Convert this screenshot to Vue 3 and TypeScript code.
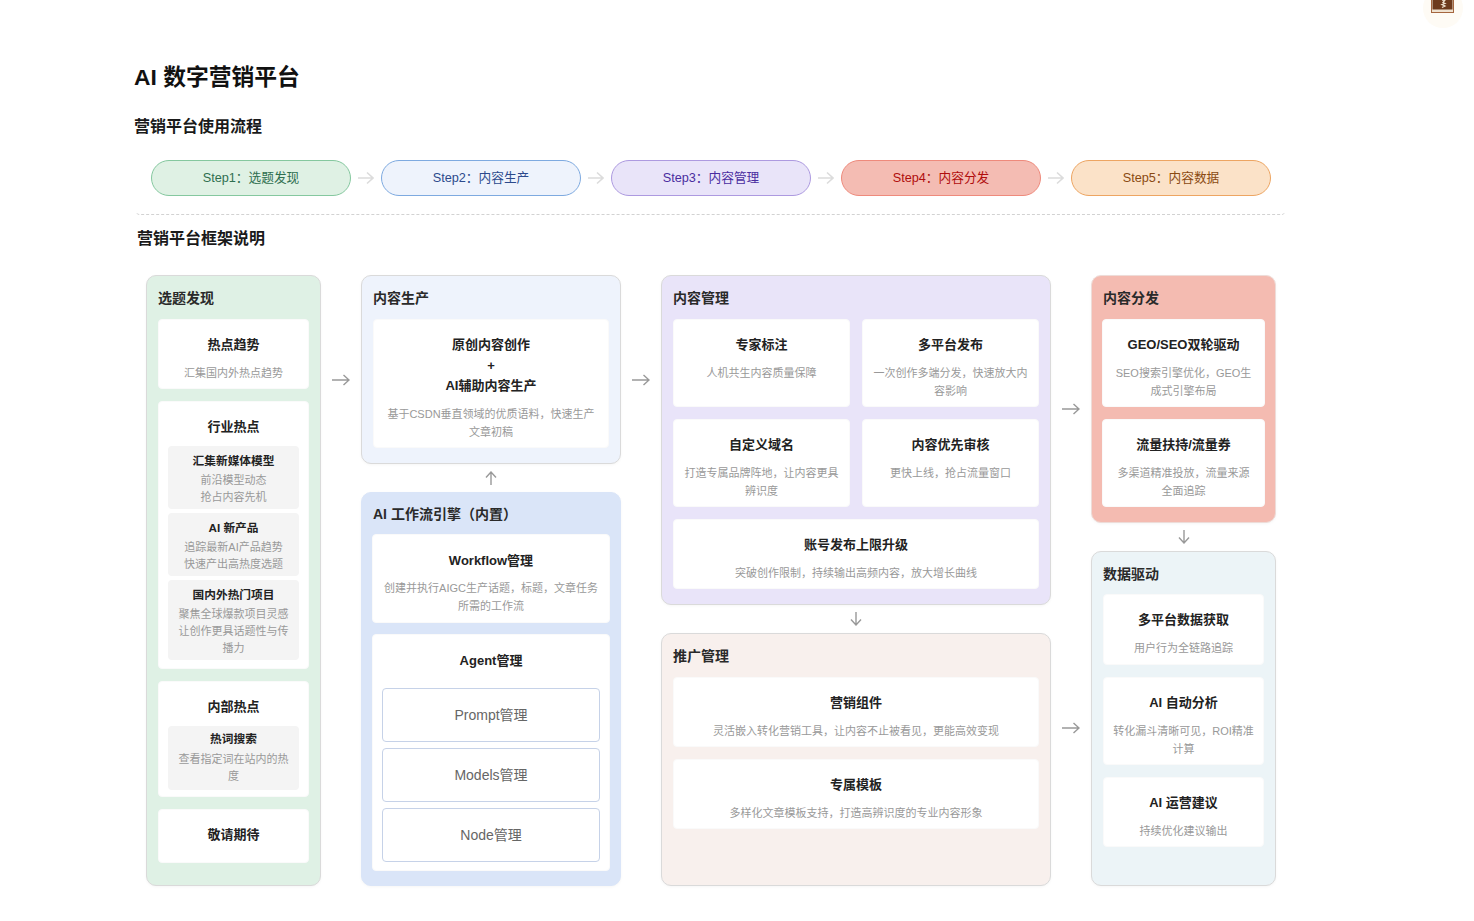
<template>
  <div class="page">
    <!-- corner badge -->
    <div class="badge" aria-hidden="true">
      <svg width="24" height="14" viewBox="0 0 24 14">
        <rect x="0.500" y="-2" width="22" height="15.500" fill="#efe2d0" stroke="#a5663f" />
        <rect x="1.500" y="-2" width="20" height="12.500" fill="#6d3a1c" />
        <path d="M11 1h3l-2 2.500 2 1-3 1 3 1.500-3 1.500" fill="none" stroke="#efe2d0" stroke-width="1.300" />
      </svg>
    </div>

    <h1 class="title">AI 数字营销平台</h1>
    <h2 class="heading">营销平台使用流程</h2>

    <div class="steps">
      <template v-for="(s, i) in steps" :key="s.text">
        <svg v-if="i > 0" class="stepArrow" width="16" height="14" viewBox="0 0 16 14">
          <path d="M0 7h15M9 1.5 15 7l-6 5.5" fill="none" stroke="#dcdcdc" stroke-width="1.6" />
        </svg>
        <div class="step" :class="s.cls">{{ s.text }}</div>
      </template>
    </div>

    <div class="divider"></div>
    <h2 class="heading second">营销平台框架说明</h2>

    <div class="frame">
      <!-- 选题发现 -->
      <section class="panel green col1">
        <h3>选题发现</h3>
        <div class="card">
          <h4>热点趋势</h4>
          <p>汇集国内外热点趋势</p>
        </div>
        <div class="card group">
          <h4>行业热点</h4>
          <div v-for="g in industry" :key="g.title" class="sub">
            <h5>{{ g.title }}</h5>
            <p>{{ g.desc }}</p>
          </div>
        </div>
        <div class="card group inner">
          <h4>内部热点</h4>
          <div class="sub">
            <h5>热词搜索</h5>
            <p>查看指定词在站内的热度</p>
          </div>
        </div>
        <div class="card soon">
          <h4>敬请期待</h4>
        </div>
      </section>

      <div class="gutter g1">
        <svg class="arrow" width="18" height="12" viewBox="0 0 18 12"><path d="M0 6h17M11.500 1 17 6l-5.500 5" /></svg>
      </div>

      <!-- 内容生产 -->
      <div class="stack col2">
        <section class="panel blue">
          <h3>内容生产</h3>
          <div class="card origin">
            <h4>原创内容创作</h4>
            <h4>+</h4>
            <h4>AI辅助内容生产</h4>
            <p>基于CSDN垂直领域的优质语料，快速生产文章初稿</p>
          </div>
        </section>
        <div class="vgap">
          <svg class="arrow" width="12" height="14" viewBox="0 0 12 14"><path d="M6 14V1M1 6.500 6 1l5 5.500" /></svg>
        </div>
        <section class="panel engine grow">
          <h3>AI 工作流引擎（内置）</h3>
          <div class="card">
            <h4>Workflow管理</h4>
            <p>创建并执行AIGC生产话题，标题，文章任务所需的工作流</p>
          </div>
          <div class="card agent">
            <h4>Agent管理</h4>
            <div v-for="a in agents" :key="a" class="tool">{{ a }}</div>
          </div>
        </section>
      </div>

      <div class="gutter g1">
        <svg class="arrow" width="18" height="12" viewBox="0 0 18 12"><path d="M0 6h17M11.500 1 17 6l-5.500 5" /></svg>
      </div>

      <!-- 内容管理 -->
      <div class="stack col3">
        <section class="panel purple">
          <h3>内容管理</h3>
          <div class="cardGrid">
            <div v-for="c in manage" :key="c.title" class="card">
              <h4>{{ c.title }}</h4>
              <p>{{ c.desc }}</p>
            </div>
            <div class="card wide">
              <h4>账号发布上限升级</h4>
              <p>突破创作限制，持续输出高频内容，放大增长曲线</p>
            </div>
          </div>
        </section>
        <div class="vgap">
          <svg class="arrow" width="12" height="14" viewBox="0 0 12 14"><path d="M6 0v13M1 7.500 6 13l5-5.500" /></svg>
        </div>
        <section class="panel rose grow">
          <h3>推广管理</h3>
          <div class="card">
            <h4>营销组件</h4>
            <p>灵活嵌入转化营销工具，让内容不止被看见，更能高效变现</p>
          </div>
          <div class="card">
            <h4>专属模板</h4>
            <p>多样化文章模板支持，打造高辨识度的专业内容形象</p>
          </div>
        </section>
      </div>

      <div class="gutter g3">
        <svg class="arrow" width="18" height="12" viewBox="0 0 18 12"><path d="M0 6h17M11.500 1 17 6l-5.500 5" /></svg>
        <svg class="arrow lower" width="18" height="12" viewBox="0 0 18 12"><path d="M0 6h17M11.500 1 17 6l-5.500 5" /></svg>
      </div>

      <!-- 内容分发 / 数据驱动 -->
      <div class="stack col4">
        <section class="panel red">
          <h3>内容分发</h3>
          <div class="card">
            <h4>GEO/SEO双轮驱动</h4>
            <p>SEO搜索引擎优化，GEO生成式引擎布局</p>
          </div>
          <div class="card">
            <h4>流量扶持/流量券</h4>
            <p>多渠道精准投放，流量来源全面追踪</p>
          </div>
        </section>
        <div class="vgap">
          <svg class="arrow" width="12" height="14" viewBox="0 0 12 14"><path d="M6 0v13M1 7.500 6 13l5-5.500" /></svg>
        </div>
        <section class="panel sky grow">
          <h3>数据驱动</h3>
          <div class="card">
            <h4>多平台数据获取</h4>
            <p>用户行为全链路追踪</p>
          </div>
          <div class="card">
            <h4>AI 自动分析</h4>
            <p>转化漏斗清晰可见，ROI精准计算</p>
          </div>
          <div class="card">
            <h4>AI 运营建议</h4>
            <p>持续优化建议输出</p>
          </div>
        </section>
      </div>
    </div>
  </div>
</template>

<script setup lang="ts">
const steps = [
  { text: 'Step1：选题发现', cls: 's1' },
  { text: 'Step2：内容生产', cls: 's2' },
  { text: 'Step3：内容管理', cls: 's3' },
  { text: 'Step4：内容分发', cls: 's4' },
  { text: 'Step5：内容数据', cls: 's5' },
];

const industry = [
  { title: '汇集新媒体模型', desc: '前沿模型动态\n抢占内容先机' },
  { title: 'AI 新产品', desc: '追踪最新AI产品趋势\n快速产出高热度选题' },
  { title: '国内外热门项目', desc: '聚焦全球爆款项目灵感\n让创作更具话题性与传播力' },
];

const agents = ['Prompt管理', 'Models管理', 'Node管理'];

const manage = [
  { title: '专家标注', desc: '人机共生内容质量保障' },
  { title: '多平台发布', desc: '一次创作多端分发，快速放大内容影响' },
  { title: '自定义域名', desc: '打造专属品牌阵地，让内容更具辨识度' },
  { title: '内容优先审核', desc: '更快上线，抢占流量窗口' },
];
</script>

<style>
html,
body {
  background: #fff;
}
</style>

<style scoped>
.page {
  position: relative;
  box-sizing: border-box;
  height: 921px;
  overflow: hidden;
  padding: 62px 0 0 134px;
  font-family: "Liberation Sans", "Noto Sans CJK SC", sans-serif;
  color: #222;
}
.badge {
  position: absolute;
  top: -12px;
  right: 11px;
  width: 40px;
  height: 40px;
  border-radius: 50%;
  background: #fefbf5;
  display: flex;
  align-items: flex-end;
  justify-content: center;
  padding-bottom: 15px;
  box-sizing: border-box;
}
.title {
  margin: 0;
  font-size: 22.800px;
  line-height: 30px;
  font-weight: 700;
  color: #111;
}
.heading {
  margin: 21px 0 0;
  font-size: 16px;
  line-height: 28px;
  font-weight: 700;
  color: #1a1a1a;
}
.heading.second {
  margin: 10px 0 0 3px;
}

.steps {
  display: flex;
  align-items: center;
  margin: 19px 0 0 17px;
}
.step {
  box-sizing: border-box;
  width: 200px;
  height: 36px;
  line-height: 34px;
  border: 1px solid;
  border-radius: 18px;
  text-align: center;
  font-size: 12.700px;
}
.stepArrow {
  flex: none;
  width: 16px;
  margin: 0 7px;
}
.s1 { background: #dff1e4; border-color: #85c89f; color: #2f6f50; }
.s2 { background: #eef3fc; border-color: #7eaae0; color: #2c4a8c; }
.s3 { background: #e9e4f9; border-color: #ad9ae0; color: #4a2da0; }
.s4 { background: #f4bcb3; border-color: #ee8a7c; color: #b00d0d; }
.s5 { background: #fbe2c8; border-color: #eda562; color: #8a4a12; }

.divider {
  width: 1149px;
  height: 18px;
  margin-left: 2px;
  border-bottom: 1px dashed #d2d2d2;
  border-radius: 0 0 4px 4px;
}

.frame {
  display: flex;
  height: 611px;
  margin: 22px 0 0 12px;
}
.col1 { width: 175px; }
.col2 { width: 260px; }
.col3 { width: 390px; }
.col4 { width: 185px; }
.stack {
  display: flex;
  flex-direction: column;
}
.grow { flex: 1; }
.gutter {
  flex: none;
  width: 40px;
  display: flex;
  flex-direction: column;
  align-items: center;
}
.g1 { padding-top: 99px; }
.g3 { padding-top: 128px; }
.lower { margin-top: 307px; }
.arrow { flex: none; }
.arrow path {
  fill: none;
  stroke: #999;
  stroke-width: 1.4;
}
.vgap {
  flex: none;
  height: 28px;
  display: flex;
  align-items: center;
  justify-content: center;
}

.panel {
  box-sizing: border-box;
  min-height: 0;
  border: 1px solid #dadada;
  border-radius: 10px;
  box-shadow: 0 1px 3px rgba(0, 0, 0, 0.04);
  padding: 0 11px 15px;
  display: flex;
  flex-direction: column;
  gap: 12px;
}
.panel h3 {
  margin: 12px 0 -2px;
  font-size: 14px;
  line-height: 21px;
  font-weight: 700;
  color: #2a2a2a;
}
.green { background: #dff1e5; }
.blue { background: #eef3fc; }
.engine { background: #dae5f8; border-color: #dae5f8; padding: 0 10px 15px; gap: 11px; }
.engine h3 { margin: 11px 0 -2px 1px; }
.engine .card { padding-top: 16px; padding-bottom: 7px; }
.engine .card p { margin-top: 7.500px; }
.purple { background: #e9e4f9; }
.rose { background: #f8f0ed; }
.red { background: #f4bbb1; border-color: #eedcd8; padding: 0 10px 15px; }
.red h3 { margin-left: 1px; }
.sky { background: #ecf4f7; }
.sky h3 { margin-bottom: -3px; }
.sky .card { padding-left: 9px; padding-right: 9px; }
.sky .card:first-of-type { min-height: 71px; }

.card {
  box-sizing: border-box;
  background: #fff;
  border: 1px solid #fafafa;
  border-radius: 4px;
  padding: 15px 10px 6px;
  text-align: center;
}
.card h4 {
  margin: 0;
  font-size: 13px;
  line-height: 20.500px;
  font-weight: 700;
  color: #222;
}
.card p {
  margin: 8.500px 0 0;
  font-size: 11px;
  line-height: 18px;
  color: #999;
}
.soon { height: 54px; }

.group {
  padding: 15px 9px 8px;
  display: flex;
  flex-direction: column;
  gap: 4px;
}
.group h4 { margin-bottom: 4.500px; }
.group.inner { height: 116px; }
.group.inner h4 { margin-bottom: 4px; }
.sub {
  background: #f4f4f4;
  border-radius: 4px;
  padding: 5px 8px 3.500px;
}
.sub h5 {
  margin: 0;
  font-size: 11.700px;
  line-height: 20px;
  font-weight: 700;
  color: #222;
}
.card .sub p {
  margin: 0.500px 0 0;
  line-height: 17px;
  white-space: pre-line;
}
.inner .sub { padding: 3px 8px 5px; }
.card.inner .sub p { margin-top: 2px; }

.engine .agent {
  flex: 1;
  padding: 16px 9px 8px;
  display: flex;
  flex-direction: column;
  gap: 6px;
}
.agent h4 { margin-bottom: 10.500px; }
.tool {
  box-sizing: border-box;
  height: 54px;
  line-height: 52px;
  border: 1px solid #c6d2e8;
  border-radius: 4px;
  font-size: 14px;
  color: #666;
}

.cardGrid {
  display: grid;
  grid-template-columns: 1fr 1fr;
  gap: 12px;
}
.wide { grid-column: 1 / 3; }
</style>
